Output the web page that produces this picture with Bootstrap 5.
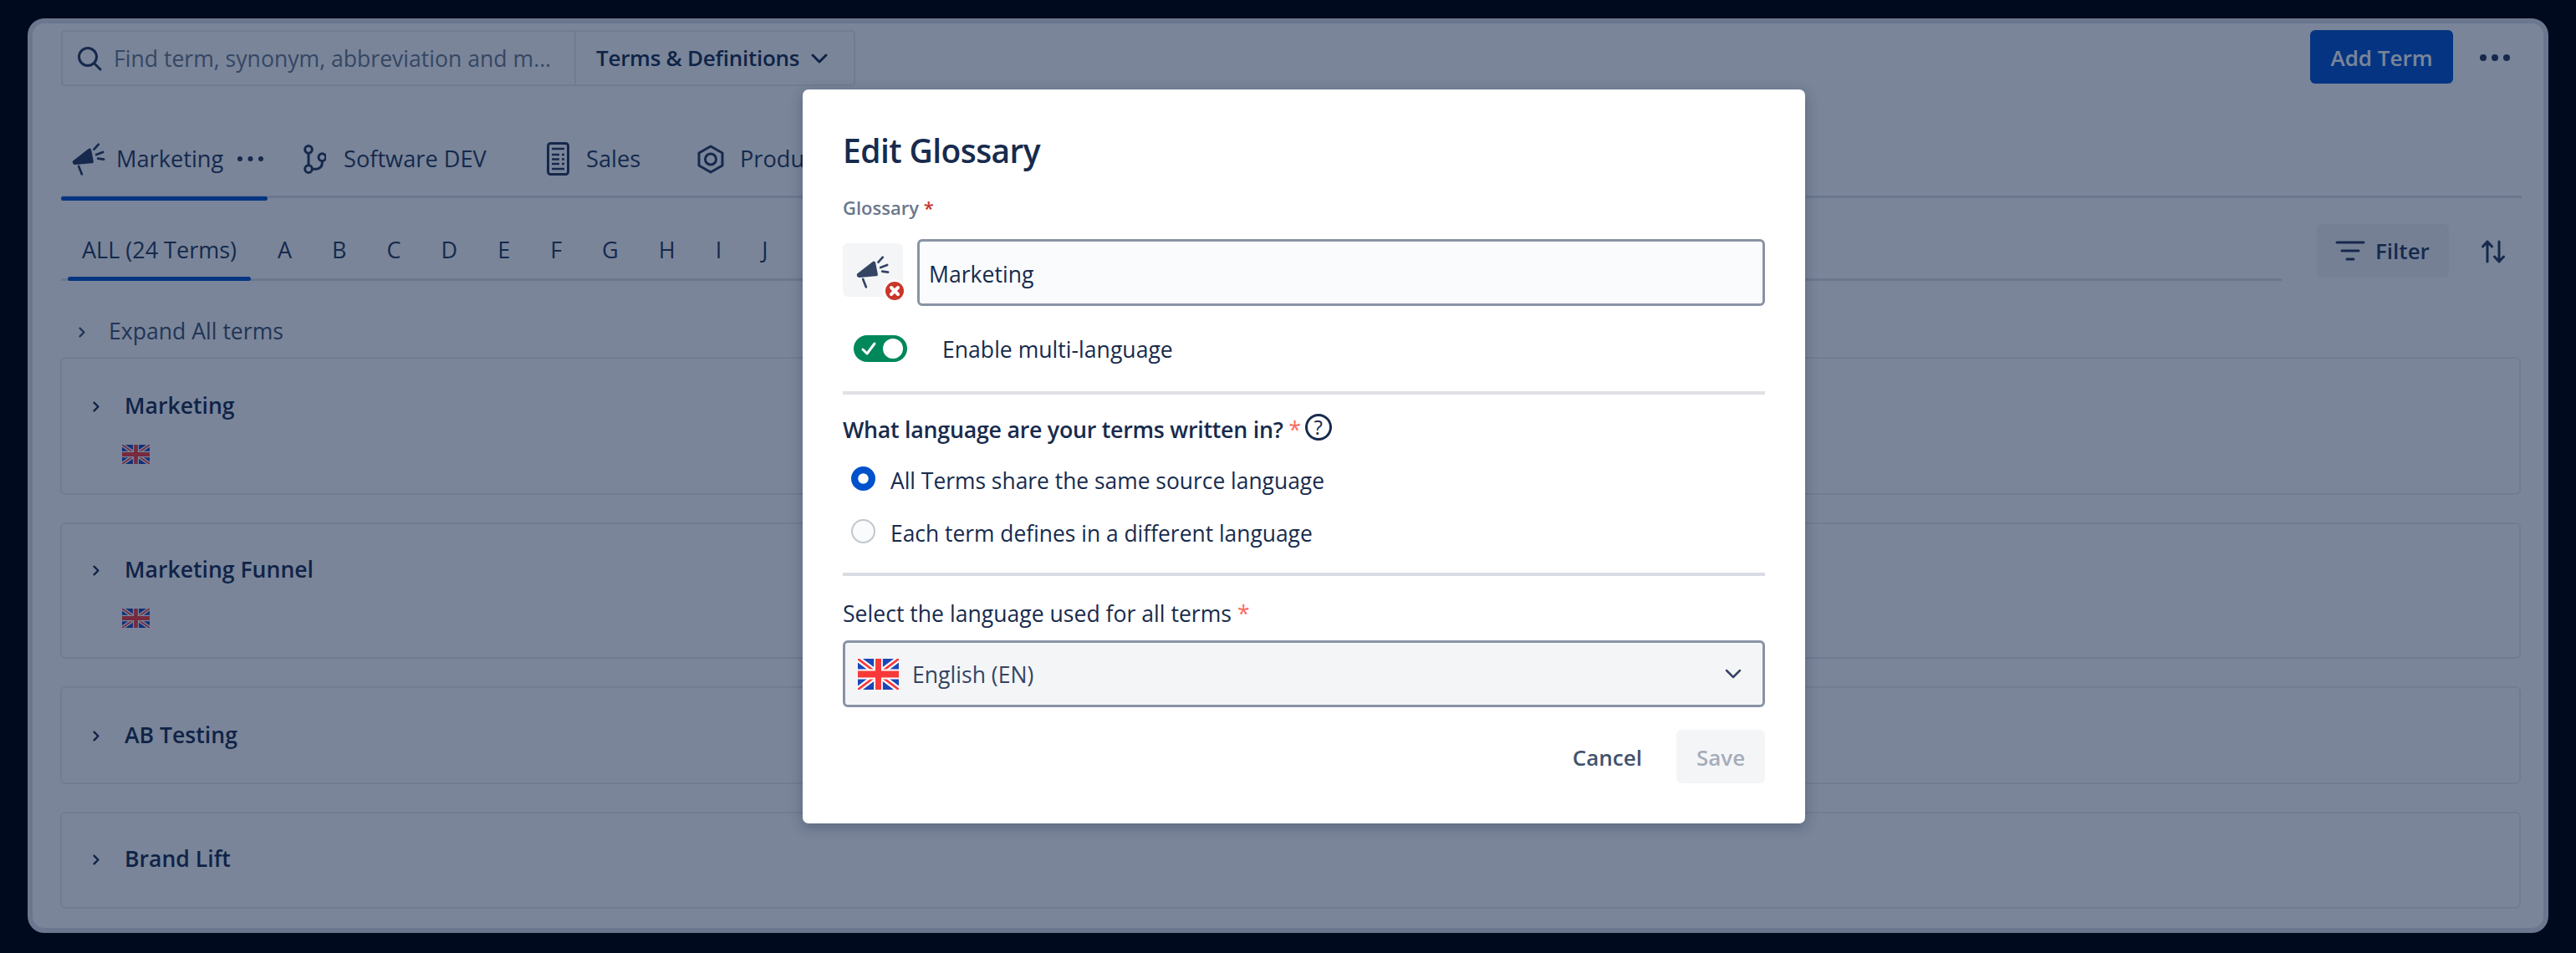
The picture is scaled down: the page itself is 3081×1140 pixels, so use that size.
<!DOCTYPE html>
<html lang="en">
<head>
    <meta charset="UTF-8">
    <title>Edit Glossary</title>
    <link href="https://cdn.jsdelivr.net/npm/bootstrap@5.3.0/dist/css/bootstrap.min.css" rel="stylesheet">
    <style>
        html, body { height: 100%; }
        body { background: #000a1e; color: #172b4d; font-family: "Open Sans", "Noto Sans", sans-serif; font-size: 26.6px; padding: 22px 33px 24px; overflow: hidden; }
        svg { display: block; flex: none; }
        .app-frame { position: relative; height: 1094px; border-radius: 20px; overflow: hidden; }
        .app-panel { height: 100%; background: #fff; border: 6px solid #dfe1e6; border-radius: 20px; padding: 8px 26px 0 34px; }
        .blanket { position: absolute; inset: 0; background: rgba(9, 30, 66, .54); padding: 85px 0 0 927px; }

        .toolbar { height: 67px; }
        .search-group { width: 950px; height: 67px; border: 2px solid #ebecf0; border-radius: 4px; }
        .search-box { width: 614px; gap: 14px; padding-left: 17px; color: #6b778c; white-space: nowrap; border-right: 2px solid #ebecf0; }
        .search-box span { padding-top: 3px; }
        .view-select { gap: 14px; padding-left: 24px; font-weight: 600; font-size: 26px; letter-spacing: -.01em; }
        .btn-add { width: 171px; height: 64px; margin-top: -3px; padding: 2px 0 0; background: #0052cc; color: #fff; font-size: 26px; font-weight: 600; border: 0; border-radius: 6px; }
        .more-dots { margin: -2px 14px 0 32px; }

        .glossary-tabs { height: 70px; margin-top: 64px; border-bottom: 3px solid #dfe1e6; color: #253858; font-size: 27.2px; }
        .glossary-tabs .tab { height: 70px; padding-bottom: 24px; display: flex; align-items: center; white-space: nowrap; }
        .tab-marketing { width: 247px; padding-left: 12px; gap: 12px; position: relative; margin-right: 42px; }
        .tab-marketing::after { content: ""; position: absolute; left: 0; right: 0; bottom: -3px; height: 5px; background: #0052cc; border-radius: 3px; }
        .tab-marketing .tab-dots { margin-left: 4px; }
        .tab-software { width: 292px; gap: 21px; }
        .tab-sales { width: 180px; gap: 20px; }
        .tab-product { gap: 19px; }

        .alpha-row { margin-top: 29px; }
        .alpha-bar { flex: 1; height: 70px; border-bottom: 3px solid #dfe1e6; padding-left: 8px; align-items: stretch; color: #253858; font-size: 27px; }
        .alpha-all { width: 219px; text-align: center; position: relative; margin-right: 8px; line-height: 65px; }
        .alpha-all::after { content: ""; position: absolute; left: 0; right: 0; bottom: -3px; height: 5px; background: #0052cc; border-radius: 3px; }
        .alpha-letter { padding: 0 24px; line-height: 65px; }
        .btn-filter { width: 158px; height: 64px; margin: 2px 0 0 42px; gap: 12px; background: #f4f5f7; border-radius: 6px; color: #253858; font-weight: 600; font-size: 26px; padding-left: 22px; }
        .sort-toggle { margin: 21px 20px 0 39px; }

        .expand-all { margin: 43px 0 0 21px; gap: 28px; color: #42526e; height: 36px; }
        .term-card { border: 2px solid #ebecf0; border-radius: 6px; width: 2943px; margin: 33px 0 0 -1px; padding: 39px 0 0 37px; font-weight: 600; font-size: 26.6px; background: transparent; }
        .term-card.first { margin-top: 12px; }
        .term-title { gap: 30px; height: 36px; }
        .term-flag { margin: 28px 0 0 35px; }
        .h-165 { height: 165px; }
        .h-163 { height: 163px; padding-top: 37px; }
        .h-117 { height: 117px; }
        .h-116 { height: 116px; padding-top: 37px; }

        .edit-modal { width: 1199px; height: 878px; padding: 48px 48px 48px; background: #fff; border: 0; border-radius: 7px; box-shadow: 0 4px 16px rgba(9, 30, 66, .3); font-size: 26.4px; }
        .edit-modal .modal-title { font-size: 39px; line-height: 50px; font-weight: 600; letter-spacing: -.015em; color: #172b4d; }
        .field-label { font-size: 22px; line-height: 30px; font-weight: 600; color: #6b778c; margin: 28px 0 0; }
        .req { color: #c9372c; }
        .req-light { color: #ff6b5e; }
        .icon-row { margin-top: 23px; gap: 17px; }
        .icon-picker { flex: none; position: relative; width: 72px; height: 64px; margin-top: 5px; padding-top: 3px; background: #f4f5f7; border-radius: 6px; align-items: center; justify-content: center; }
        .icon-remove { position: absolute; right: -4px; bottom: -7px; width: 28px; height: 28px; background: #fff; border-radius: 50%; padding: 3px; }
        .edit-modal .form-control { height: 80px; font-size: 26.6px; padding: 3px 11px 0; color: #172b4d; background: #fafbfc; border: 3px solid #8993a4; border-radius: 6px; box-shadow: none; }
        .toggle-row { margin: 35px 0 0 13px; gap: 42px; height: 32px; font-size: 26.6px; }
        .toggle-row span { padding-top: 3px; }
        .rule { height: 4px; background: #dfe1e6; opacity: 1; border: 0; margin: 0; }
        .rule-1 { margin-top: 35px; }
        .question { margin-top: 24px; font-weight: 600; font-size: 26.8px; letter-spacing: -.01em; line-height: 36px; gap: 5px; }
        .help-mark { width: 32px; height: 32px; border: 3px solid #172b4d; border-radius: 50%; font-size: 24px; line-height: 25px; text-align: center; font-weight: 400; margin-top: -1px; letter-spacing: 0; }
        .edit-modal .form-check { display: flex; align-items: center; gap: 18px; margin: 0 0 0 10px; padding: 0; height: 40px; }
        .edit-modal .form-check-input { width: 29px; height: 29px; margin: -4px 0 0; float: none; border: 2px solid #c1c7d0; background-color: #fafbfc; }
        .edit-modal .form-check-input:checked { background-color: #0052cc; border-color: #0052cc; }
        .edit-modal .form-check-label { color: #172b4d; padding-top: 3px; }
        .radio-first { margin-top: 22px !important; }
        .radio-second { margin-top: 23px !important; }
        .rule-2 { margin-top: 28px; background: #d9dce2; }
        .select-label { margin: 27px 0 0; line-height: 36px; font-size: 26.6px; }
        .lang-select { height: 80px; margin-top: 14px; padding: 0 25px 0 15px; gap: 16px; background: #f4f5f7; border: 3px solid #8993a4; border-radius: 6px; color: #344563; font-size: 26.6px; }
        .lang-select span { padding-top: 3px; }
        .modal-actions { margin-top: 27px; gap: 41px; }
        .btn-cancel { padding: 2px 0 0; font-size: 26px; font-weight: 600; color: #42526e; border: 0; background: none; }
        .btn-save { width: 106px; height: 64px; padding: 2px 0 0; font-size: 26px; font-weight: 600; color: #a5adba; background: #f4f5f7; border: 0; border-radius: 6px; }
    </style>
</head>
<body>
    <svg width="0" height="0" class="position-absolute">
        <defs>
            <symbol id="megaphone" viewBox="70 65 125 120">
                <path fill="currentColor" d="M75 133 133 88q7-3 9 5l8 40q1 8-7 8l-58 5q-11 0-10-13z"/>
                <path fill="none" stroke="currentColor" stroke-width="8" stroke-linecap="round" d="M97 152l11 28"/>
                <path fill="none" stroke="currentColor" stroke-width="8" stroke-linecap="round" d="M152 91l16-18M160 110l24-9M166 124l21 3"/>
            </symbol>
            <symbol id="uk-flag" viewBox="0 0 60 40" preserveAspectRatio="none">
                <rect width="60" height="40" rx="2" fill="#1a47b8"/>
                <path stroke="#fff" stroke-width="8" d="M0 0 60 40M60 0 0 40"/>
                <path stroke="#f93939" stroke-width="3" d="M0 0 60 40M60 0 0 40"/>
                <path stroke="#fff" stroke-width="13" d="M30 0V40M0 20H60"/>
                <path stroke="#f93939" stroke-width="8.5" d="M30 0V40M0 20H60"/>
            </symbol>
            <symbol id="chevron-right" viewBox="0 0 10 16">
                <path fill="none" stroke="currentColor" stroke-width="3" stroke-linecap="round" stroke-linejoin="round" d="M2 2l6 6-6 6"/>
            </symbol>
        </defs>
    </svg>

    <div class="app-frame">
        <div class="app-panel">
            <div class="toolbar d-flex justify-content-between">
                <div class="search-group d-flex align-items-stretch">
                    <div class="search-box d-flex align-items-center">
                        <svg width="30" height="30" viewBox="0 0 30 30"><circle cx="13" cy="13" r="10.5" fill="none" stroke="#253858" stroke-width="3"/><path stroke="#253858" stroke-width="3" stroke-linecap="round" d="M21 21l7 7"/></svg>
                        <span>Find term, synonym, abbreviation and m...</span>
                    </div>
                    <div class="view-select d-flex align-items-center">
                        <span>Terms &amp; Definitions</span>
                        <svg width="20" height="12" viewBox="0 0 20 12"><path fill="none" stroke="#172b4d" stroke-width="3" stroke-linecap="round" stroke-linejoin="round" d="M2 2l8 8 8-8"/></svg>
                    </div>
                </div>
                <div class="d-flex align-items-center">
                    <button class="btn btn-add" type="button">Add Term</button>
                    <svg class="more-dots" width="36" height="8" viewBox="0 0 36 8" fill="#253858"><circle cx="4" cy="4" r="4"/><circle cx="18" cy="4" r="4"/><circle cx="32" cy="4" r="4"/></svg>
                </div>
            </div>

            <div class="glossary-tabs d-flex">
                <div class="tab tab-marketing">
                    <svg width="42" height="40"><use href="#megaphone"/></svg>
                    <span>Marketing</span>
                    <svg class="tab-dots" width="33" height="8" viewBox="0 0 33 8" fill="#253858"><circle cx="4" cy="4" r="3"/><circle cx="16.5" cy="4" r="3"/><circle cx="29" cy="4" r="3"/></svg>
                </div>
                <div class="tab tab-software">
                    <svg width="28" height="35" viewBox="0 0 24 30" fill="none" stroke="currentColor" stroke-width="2.6"><circle cx="6" cy="5" r="3.7"/><circle cx="6" cy="25" r="3.7"/><circle cx="20" cy="13" r="3.7"/><path d="M6 9v12M20 17v2a6 6 0 0 1-6 6h-4"/></svg>
                    <span>Software DEV</span>
                </div>
                <div class="tab tab-sales">
                    <svg width="27" height="40" viewBox="0 0 27 40" fill="none" stroke="currentColor"><rect x="1.5" y="1.5" width="24" height="37" rx="3" stroke-width="3"/><path stroke-width="2.5" d="M6 8h15M6 15h9M6 20.5h9M6 26h9M6 32h15M18 15h3M18 20.5h3M18 26h3"/></svg>
                    <span>Sales</span>
                </div>
                <div class="tab tab-product">
                    <svg width="32" height="35" viewBox="0 0 32 35" fill="none" stroke="currentColor" stroke-width="3"><path stroke-linejoin="round" d="M16 2 30 10v15L16 33 2 25V10z"/><circle cx="16" cy="17.5" r="6.5"/></svg>
                    <span>Product</span>
                </div>
            </div>

            <div class="alpha-row d-flex">
                <div class="alpha-bar d-flex">
                    <div class="alpha-all">ALL (24 Terms)</div>
                    <div class="alpha-letter">A</div>
                    <div class="alpha-letter">B</div>
                    <div class="alpha-letter">C</div>
                    <div class="alpha-letter">D</div>
                    <div class="alpha-letter">E</div>
                    <div class="alpha-letter">F</div>
                    <div class="alpha-letter">G</div>
                    <div class="alpha-letter">H</div>
                    <div class="alpha-letter">I</div>
                    <div class="alpha-letter">J</div>
                </div>
                <div class="btn-filter d-flex align-items-center">
                    <svg width="36" height="24" viewBox="0 0 36 24" fill="none" stroke="#253858" stroke-width="3" stroke-linecap="round"><path d="M2 2h32M8 12h20M14 22h8"/></svg>
                    <span>Filter</span>
                </div>
                <svg class="sort-toggle" width="28" height="28" viewBox="0 0 28 28" fill="none" stroke="#253858" stroke-width="3" stroke-linecap="round" stroke-linejoin="round"><path d="M7 26V2M1.5 8 7 2l5.5 6M21 2v24M15.5 20l5.5 6 5.5-6"/></svg>
            </div>

            <div class="expand-all d-flex align-items-center">
                <svg width="8" height="13" color="#42526e"><use href="#chevron-right"/></svg>
                <span>Expand All terms</span>
            </div>

            <div class="card term-card first h-165">
                <div class="term-title d-flex align-items-center">
                    <svg width="8" height="13" color="#172b4d"><use href="#chevron-right"/></svg>
                    <span>Marketing</span>
                </div>
                <svg class="term-flag" width="33" height="23"><use href="#uk-flag"/></svg>
            </div>
            <div class="card term-card h-163">
                <div class="term-title d-flex align-items-center">
                    <svg width="8" height="13" color="#172b4d"><use href="#chevron-right"/></svg>
                    <span>Marketing Funnel</span>
                </div>
                <svg class="term-flag" width="33" height="23"><use href="#uk-flag"/></svg>
            </div>
            <div class="card term-card h-117">
                <div class="term-title d-flex align-items-center">
                    <svg width="8" height="13" color="#172b4d"><use href="#chevron-right"/></svg>
                    <span>AB Testing</span>
                </div>
            </div>
            <div class="card term-card h-116">
                <div class="term-title d-flex align-items-center">
                    <svg width="8" height="13" color="#172b4d"><use href="#chevron-right"/></svg>
                    <span>Brand Lift</span>
                </div>
            </div>
        </div>

        <div class="blanket d-flex align-items-start">
            <div class="modal-content edit-modal">
                <h5 class="modal-title">Edit Glossary</h5>
                <div class="field-label">Glossary <span class="req">*</span></div>
                <div class="icon-row d-flex">
                    <div class="icon-picker d-flex">
                        <svg width="42" height="40" color="#344563"><use href="#megaphone"/></svg>
                        <div class="icon-remove">
                            <svg width="22" height="22" viewBox="0 0 22 22"><circle cx="11" cy="11" r="11" fill="#c9372c"/><path stroke="#fff" stroke-width="4" stroke-linecap="round" d="M7 7l8 8M15 7l-8 8"/></svg>
                        </div>
                    </div>
                    <input class="form-control" type="text" value="Marketing">
                </div>

                <div class="toggle-row d-flex align-items-center">
                    <svg width="64" height="32" viewBox="0 0 64 32"><rect width="64" height="32" rx="16" fill="#00875a"/><circle cx="47" cy="16" r="12" fill="#fff"/><path fill="none" stroke="#fff" stroke-width="3" stroke-linecap="round" stroke-linejoin="round" d="M11 17l5 5 9-12"/></svg>
                    <span>Enable multi-language</span>
                </div>
                <hr class="rule rule-1">

                <div class="question d-flex">
                    <span>What language are your terms written in? <span class="req-light fw-normal">*</span></span>
                    <span class="help-mark">?</span>
                </div>
                <div class="form-check radio-first">
                    <input class="form-check-input" type="radio" name="termLanguage" id="sameLanguage" checked>
                    <label class="form-check-label" for="sameLanguage">All Terms share the same source language</label>
                </div>
                <div class="form-check radio-second">
                    <input class="form-check-input" type="radio" name="termLanguage" id="differentLanguage">
                    <label class="form-check-label" for="differentLanguage">Each term defines in a different language</label>
                </div>
                <hr class="rule rule-2">

                <div class="select-label">Select the language used for all terms <span class="req-light">*</span></div>
                <div class="lang-select d-flex align-items-center">
                    <svg width="49" height="37"><use href="#uk-flag"/></svg>
                    <span class="flex-grow-1">English (EN)</span>
                    <svg width="20" height="12" viewBox="0 0 20 12"><path fill="none" stroke="#344563" stroke-width="2.5" stroke-linecap="round" stroke-linejoin="round" d="M2 2l8 8 8-8"/></svg>
                </div>

                <div class="modal-actions d-flex justify-content-end align-items-center">
                    <button class="btn btn-cancel" type="button">Cancel</button>
                    <button class="btn btn-save" type="button">Save</button>
                </div>
            </div>
        </div>
    </div>
</body>
</html>
